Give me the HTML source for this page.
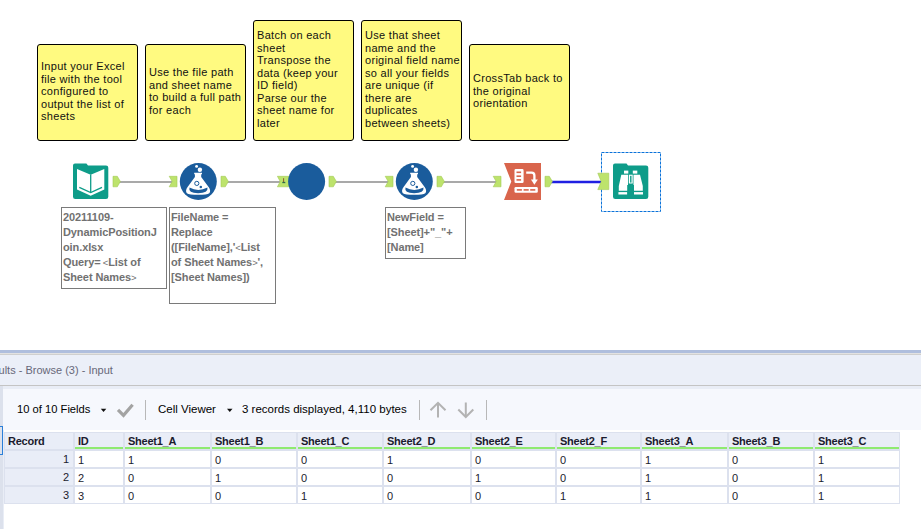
<!DOCTYPE html>
<html><head><meta charset="utf-8">
<style>
*{box-sizing:border-box;margin:0;padding:0}
html,body{width:921px;height:529px;overflow:hidden;background:#fff;font-family:"Liberation Sans",sans-serif}
.abs{position:absolute}
.note{position:absolute;border:1px solid #000;border-radius:3px;background:#FFFA80;width:101px}
.nt{position:absolute;left:3px;font-size:11px;line-height:12.5px;letter-spacing:0.3px;color:#111;white-space:pre}
.ann{position:absolute;border:1px solid #7a7a7a;background:#fff}
.at{position:absolute;left:1px;font-size:11px;line-height:15px;font-weight:bold;color:#717171;white-space:pre;letter-spacing:-0.1px}
.hc{position:absolute;top:432px;height:18px;border:1px solid #DCE1EE;background:#E9EDF7}
.gr{position:absolute;top:447px;height:2px;background:#8FEA70}
.ht{position:absolute;top:435px;font-size:11px;line-height:12px;font-weight:bold;color:#1b1b2e;white-space:pre;letter-spacing:-0.25px}
.rc{position:absolute;height:18px;border:1px solid #DCE1EE;background:#E9EDF7}
.dc{position:absolute;height:18px;border:1px solid #DCE1EE;background:#fff}
.rn{position:absolute;text-align:right;font-size:11px;line-height:12px;color:#1b1b2e}
.dt{position:absolute;font-size:11px;line-height:12px;color:#1b1b2e}
.tb{position:absolute;top:403px;line-height:12px;color:#000;white-space:pre}
</style></head><body>

<!-- sticky notes -->
<div class="note" style="left:37px;top:44px;height:97px"><div class="nt" style="top:15px">Input your Excel
file with the tool
configured to
output the list of
sheets</div></div>
<div class="note" style="left:145px;top:44px;height:97px"><div class="nt" style="top:21px">Use the file path
and sheet name
to build a full path
for each</div></div>
<div class="note" style="left:253px;top:20px;height:121px"><div class="nt" style="top:8px">Batch on each
sheet
Transpose the
data (keep your
ID field)
Parse our the
sheet name for
later</div></div>
<div class="note" style="left:361px;top:20px;height:121px"><div class="nt" style="top:8px">Use that sheet
name and the
original field name
so all your fields
are unique (if
there are
duplicates
between sheets)</div></div>
<div class="note" style="left:469px;top:44px;height:97px"><div class="nt" style="top:27px">CrossTab back to
the original
orientation</div></div>

<!-- annotation boxes -->
<div class="ann" style="left:61px;top:207px;width:106px;height:82px"><div class="at" style="top:2px">20211109-
DynamicPositionJ
oin.xlsx
Query=&#8201;<span style="font-size:9.5px;font-weight:normal">&lt;</span>List of
Sheet Names<span style="font-size:9.5px;font-weight:normal">&gt;</span></div></div>
<div class="ann" style="left:169px;top:207px;width:107px;height:97px"><div class="at" style="top:2px">FileName =
Replace
([FileName],'<span style="font-size:9.5px;font-weight:normal">&lt;</span>List
of Sheet Names<span style="font-size:9.5px;font-weight:normal">&gt;</span>',
[Sheet Names])</div></div>
<div class="ann" style="left:385px;top:207px;width:81px;height:52px"><div class="at" style="top:2px">NewField =
[Sheet]+"_"+
[Name]</div></div>

<!-- workflow svg -->
<svg class="abs" style="left:0;top:0" width="921" height="340" viewBox="0 0 921 340">
  <g stroke="#a9a9a9" stroke-width="2">
    <line x1="119" y1="182" x2="172" y2="182"/>
    <line x1="227" y1="182" x2="280" y2="182"/>
    <line x1="335" y1="182" x2="388" y2="182"/>
    <line x1="443" y1="182" x2="496" y2="182"/>
  </g>
  <line x1="551" y1="182" x2="601" y2="182" stroke="#2020E2" stroke-width="2.3"/>

  <rect x="601.5" y="152.5" width="59" height="59" fill="none" stroke="#0B72D9" stroke-width="1" stroke-dasharray="3,1"/>
  <g fill="#BDE36C" stroke="#A2CA55" stroke-width="0.6">
    <path d="M113,176.3 H117.3 L120.4,181.5 L117.3,186.8 H113 Z"/>
    <path d="M221,176.3 H225.3 L228.4,181.5 L225.3,186.8 H221 Z"/>
    <path d="M329,176.3 H333.3 L336.4,181.5 L333.3,186.8 H329 Z"/>
    <path d="M437,176.3 H441.3 L444.4,181.5 L441.3,186.8 H437 Z"/>
    <path d="M545,176.3 H549.3 L552.4,181.5 L549.3,186.8 H545 Z"/>
  </g>
  <g fill="#BDE36C" stroke="#A2CA55" stroke-width="0.6">
    <path d="M169.2,176.3 H177 V186.8 H169.2 L172.2,181.5 Z"/>
    <path d="M277.4,176.3 H289 V186.8 H277.4 L280.2,181.5 Z"/>
    <path d="M385.2,176.3 H393 V186.8 H385.2 L388.2,181.5 Z"/>
    <path d="M493.2,176.3 H501 V186.8 H493.2 L496.2,181.5 Z"/>
    <path d="M597.8,173.2 H608.8 V189.6 H597.8 L601.2,181.5 Z"/>
  </g>

  <!-- input tool -->
  <path d="M73,165.5 Q73,163.4 75,163.4 H86.4 L88,165.6 H106 Q108.3,165.6 108.3,167.8 V196.8 Q108.3,199 106,199 H75.3 Q73,199 73,196.8 Z" fill="#0E9C89"/>
  <path d="M77,169.1 L90.7,174.7 L104.3,169.1 V189.4 L90.7,195.8 L77,189.4 Z" fill="#fff"/>
  <g stroke="#0E9C89" stroke-width="1.3" fill="none">
    <path d="M90.7,174.5 V192.5"/>
    <path d="M79.3,187.3 L90.7,192.6 L102,187.3"/>
  </g>

  <!-- formula 1 -->
  <g transform="translate(198.3,181.5)">
    <circle r="18.5" fill="#1A5C9C"/>
    <g fill="#fff">
      <circle cx="-1.7" cy="-15.1" r="1.45"/>
      <circle cx="1.6" cy="-11.8" r="2.2"/>
      <path d="M-4.1,-8.7 H3.7 V-7.2 H2.9 V-4.6 L10.3,5.6 Q13,9.4 11,11.8 Q8.8,13.3 -0.2,13.3 Q-9.2,13.3 -11.4,11.8 Q-13.4,9.4 -10.7,5.6 L-3.4,-4.6 V-7.2 H-4.1 Z"/>
    </g>
    <path d="M-8.8,6 Q-0.2,10.8 9.2,6 Q10.2,11.6 -0.2,11.8 Q-10.4,11.6 -8.8,6 Z" fill="#1A5C9C"/>
    <circle cx="-1.5" cy="1.9" r="2.1" fill="none" stroke="#1A5C9C" stroke-width="1"/>
    <circle cx="2.5" cy="5.4" r="1.25" fill="#1A5C9C"/>
  </g>

  <!-- batch macro -->
  <circle cx="306.6" cy="181.5" r="18.5" fill="#1A5C9C"/>
  <path d="M283.6,178.2 V182.6" stroke="#8a5a2a" stroke-width="1"/>
  <path d="M282.3,182.5 H285.3" stroke="#2f6a4a" stroke-width="1.3"/>

  <!-- formula 2 -->
  <g transform="translate(414.3,181.5)">
    <circle r="18.5" fill="#1A5C9C"/>
    <g fill="#fff">
      <circle cx="-1.7" cy="-15.1" r="1.45"/>
      <circle cx="1.6" cy="-11.8" r="2.2"/>
      <path d="M-4.1,-8.7 H3.7 V-7.2 H2.9 V-4.6 L10.3,5.6 Q13,9.4 11,11.8 Q8.8,13.3 -0.2,13.3 Q-9.2,13.3 -11.4,11.8 Q-13.4,9.4 -10.7,5.6 L-3.4,-4.6 V-7.2 H-4.1 Z"/>
    </g>
    <path d="M-8.8,6 Q-0.2,10.8 9.2,6 Q10.2,11.6 -0.2,11.8 Q-10.4,11.6 -8.8,6 Z" fill="#1A5C9C"/>
    <circle cx="-1.5" cy="1.9" r="2.1" fill="none" stroke="#1A5C9C" stroke-width="1"/>
    <circle cx="2.5" cy="5.4" r="1.25" fill="#1A5C9C"/>
  </g>

  <!-- crosstab -->
  <path d="M504,163 H541 V200 H504 L511.3,181.5 Z" fill="#D9654C"/>
  <g fill="#fff">
    <rect x="514.5" y="169.1" width="9.1" height="13.9" rx="1.3"/>
    <rect x="514.5" y="187" width="23.3" height="5.8" rx="1.3"/>
    <path d="M531,179.4 H537.8 L534.4,184.8 Z"/>
  </g>
  <path d="M526.2,172.6 H531.6 Q534.4,172.6 534.4,175.4 V180" fill="none" stroke="#fff" stroke-width="2.3"/>
  <g fill="#D9654C">
    <rect x="516.5" y="171.5" width="4.6" height="1.6"/>
    <rect x="516.5" y="175.4" width="4.6" height="1.6"/>
    <rect x="516.5" y="179.1" width="4.6" height="1.6"/>
    <rect x="516.8" y="189.1" width="5.1" height="1.6"/>
    <rect x="523.6" y="189.1" width="5.1" height="1.6"/>
    <rect x="530.2" y="189.1" width="5.1" height="1.6"/>
  </g>

  <!-- browse -->
  <path d="M613,165.5 Q613,163.4 615,163.4 H626.5 L628,165.6 H646 Q648.3,165.6 648.3,167.8 V196.8 Q648.3,199 646,199 H615.3 Q613,199 613,196.8 Z" fill="#0E9C89"/>
  <g fill="#fff">
    <rect x="624" y="170.6" width="4.3" height="3"/>
    <rect x="632.8" y="170.6" width="4.5" height="3"/>
    <path d="M621.3,174.7 H628 V185 H627.2 V190.8 H618.8 V186 Z"/>
    <path d="M633.5,174.7 H640 L642.8,186 V190.8 H634 V185 H633.5 Z"/>
    <rect x="628.8" y="174.7" width="3.9" height="8.8"/>
    <rect x="618.4" y="192.1" width="8.7" height="2.4"/>
    <rect x="634" y="192.1" width="9" height="2.4"/>
  </g>
  <rect x="630.1" y="175.8" width="1.4" height="6.8" fill="#0E9C89"/>
</svg>

<!-- results panel -->
<div class="abs" style="left:0;top:350px;width:921px;height:3px;background:#AFBEDD"></div>
<div class="abs" style="left:0;top:353px;width:921px;height:1px;background:#E2E2E2"></div>
<div class="abs" style="left:0;top:354px;width:921px;height:1px;background:#CFCFCF"></div>
<div class="abs" style="left:0;top:355px;width:921px;height:30px;background:#EBEFF8"></div>
<div class="abs" style="left:-21px;top:364px;font-size:11px;line-height:12px;color:#686878;white-space:pre">Results - Browse (3) - Input</div>
<div class="abs" style="left:0;top:385px;width:921px;height:1px;background:#C4C4C4"></div>
<div class="abs" style="left:0;top:386px;width:921px;height:143px;background:#E9EDF6"></div>
<div class="abs" style="left:3px;top:389px;width:918px;height:41px;background:#F6F8FD"></div>
<div class="abs" style="left:4px;top:430px;width:917px;height:99px;background:#fff"></div>
<div class="abs" style="left:0;top:386px;width:3px;height:143px;background:#DCE1EC"></div>
<div class="abs" style="left:-10px;top:426px;width:13px;height:29px;border:1px solid #2B7FD8"></div>

<div class="tb" style="left:17px;font-size:11.2px">10 of 10 Fields</div>
<svg class="abs" style="left:0;top:386px" width="921" height="45">
  <path d="M100.8,22.8 H106.3 L103.55,26 Z" fill="#111"/>
  <path d="M118,23.8 L123.5,29.3 L132.6,18.8" fill="none" stroke="#a3a3a3" stroke-width="3.2"/>
  <line x1="145.5" y1="14" x2="145.5" y2="34" stroke="#b8b8b8" stroke-width="1"/>
  <path d="M227,22.8 H232.5 L229.75,26 Z" fill="#111"/>
  <line x1="419.5" y1="14" x2="419.5" y2="34" stroke="#b8b8b8" stroke-width="1"/>
  <line x1="486.5" y1="14" x2="486.5" y2="34" stroke="#b8b8b8" stroke-width="1"/>
  <g fill="none" stroke="#b3b3b3" stroke-width="2">
    <path d="M438,31.5 V17"/><path d="M430.5,24.3 L438,16.8 L445.5,24.3"/>
    <path d="M465.8,16.5 V31"/><path d="M458.3,23.5 L465.8,31 L473.3,23.5"/>
  </g>
</svg>
<div class="tb" style="left:158px;font-size:11.5px">Cell Viewer</div>
<div class="tb" style="left:242px;font-size:11.5px">3 records displayed, 4,110 bytes</div>

<!-- table -->
<div class="hc" style="left:4px;width:70px"></div>
<div class="ht" style="left:8px">Record</div>
<div class="hc" style="left:74px;width:50px"></div>
<div class="gr" style="left:75px;width:48px"></div>
<div class="ht" style="left:78px">ID</div>
<div class="hc" style="left:124px;width:87px"></div>
<div class="gr" style="left:125px;width:85px"></div>
<div class="ht" style="left:128px">Sheet1_A</div>
<div class="hc" style="left:211px;width:86px"></div>
<div class="gr" style="left:212px;width:84px"></div>
<div class="ht" style="left:215px">Sheet1_B</div>
<div class="hc" style="left:297px;width:86px"></div>
<div class="gr" style="left:298px;width:84px"></div>
<div class="ht" style="left:301px">Sheet1_C</div>
<div class="hc" style="left:383px;width:88px"></div>
<div class="gr" style="left:384px;width:86px"></div>
<div class="ht" style="left:387px">Sheet2_D</div>
<div class="hc" style="left:471px;width:85px"></div>
<div class="gr" style="left:472px;width:83px"></div>
<div class="ht" style="left:475px">Sheet2_E</div>
<div class="hc" style="left:556px;width:85px"></div>
<div class="gr" style="left:557px;width:83px"></div>
<div class="ht" style="left:560px">Sheet2_F</div>
<div class="hc" style="left:641px;width:87px"></div>
<div class="gr" style="left:642px;width:85px"></div>
<div class="ht" style="left:645px">Sheet3_A</div>
<div class="hc" style="left:728px;width:86px"></div>
<div class="gr" style="left:729px;width:84px"></div>
<div class="ht" style="left:732px">Sheet3_B</div>
<div class="hc" style="left:814px;width:86px"></div>
<div class="gr" style="left:815px;width:84px"></div>
<div class="ht" style="left:818px">Sheet3_C</div>
<div class="rc" style="left:4px;top:450px;width:70px"></div>
<div class="rn" style="left:4px;top:453px;width:65px">1</div>
<div class="dc" style="left:74px;top:450px;width:50px"></div>
<div class="dt" style="left:78px;top:454px">1</div>
<div class="dc" style="left:124px;top:450px;width:87px"></div>
<div class="dt" style="left:128px;top:454px">1</div>
<div class="dc" style="left:211px;top:450px;width:86px"></div>
<div class="dt" style="left:215px;top:454px">0</div>
<div class="dc" style="left:297px;top:450px;width:86px"></div>
<div class="dt" style="left:301px;top:454px">0</div>
<div class="dc" style="left:383px;top:450px;width:88px"></div>
<div class="dt" style="left:387px;top:454px">1</div>
<div class="dc" style="left:471px;top:450px;width:85px"></div>
<div class="dt" style="left:475px;top:454px">0</div>
<div class="dc" style="left:556px;top:450px;width:85px"></div>
<div class="dt" style="left:560px;top:454px">0</div>
<div class="dc" style="left:641px;top:450px;width:87px"></div>
<div class="dt" style="left:645px;top:454px">1</div>
<div class="dc" style="left:728px;top:450px;width:86px"></div>
<div class="dt" style="left:732px;top:454px">0</div>
<div class="dc" style="left:814px;top:450px;width:86px"></div>
<div class="dt" style="left:818px;top:454px">1</div>
<div class="rc" style="left:4px;top:468px;width:70px"></div>
<div class="rn" style="left:4px;top:471px;width:65px">2</div>
<div class="dc" style="left:74px;top:468px;width:50px"></div>
<div class="dt" style="left:78px;top:472px">2</div>
<div class="dc" style="left:124px;top:468px;width:87px"></div>
<div class="dt" style="left:128px;top:472px">0</div>
<div class="dc" style="left:211px;top:468px;width:86px"></div>
<div class="dt" style="left:215px;top:472px">1</div>
<div class="dc" style="left:297px;top:468px;width:86px"></div>
<div class="dt" style="left:301px;top:472px">0</div>
<div class="dc" style="left:383px;top:468px;width:88px"></div>
<div class="dt" style="left:387px;top:472px">0</div>
<div class="dc" style="left:471px;top:468px;width:85px"></div>
<div class="dt" style="left:475px;top:472px">1</div>
<div class="dc" style="left:556px;top:468px;width:85px"></div>
<div class="dt" style="left:560px;top:472px">0</div>
<div class="dc" style="left:641px;top:468px;width:87px"></div>
<div class="dt" style="left:645px;top:472px">1</div>
<div class="dc" style="left:728px;top:468px;width:86px"></div>
<div class="dt" style="left:732px;top:472px">0</div>
<div class="dc" style="left:814px;top:468px;width:86px"></div>
<div class="dt" style="left:818px;top:472px">1</div>
<div class="rc" style="left:4px;top:486px;width:70px"></div>
<div class="rn" style="left:4px;top:489px;width:65px">3</div>
<div class="dc" style="left:74px;top:486px;width:50px"></div>
<div class="dt" style="left:78px;top:490px">3</div>
<div class="dc" style="left:124px;top:486px;width:87px"></div>
<div class="dt" style="left:128px;top:490px">0</div>
<div class="dc" style="left:211px;top:486px;width:86px"></div>
<div class="dt" style="left:215px;top:490px">0</div>
<div class="dc" style="left:297px;top:486px;width:86px"></div>
<div class="dt" style="left:301px;top:490px">1</div>
<div class="dc" style="left:383px;top:486px;width:88px"></div>
<div class="dt" style="left:387px;top:490px">0</div>
<div class="dc" style="left:471px;top:486px;width:85px"></div>
<div class="dt" style="left:475px;top:490px">0</div>
<div class="dc" style="left:556px;top:486px;width:85px"></div>
<div class="dt" style="left:560px;top:490px">1</div>
<div class="dc" style="left:641px;top:486px;width:87px"></div>
<div class="dt" style="left:645px;top:490px">1</div>
<div class="dc" style="left:728px;top:486px;width:86px"></div>
<div class="dt" style="left:732px;top:490px">0</div>
<div class="dc" style="left:814px;top:486px;width:86px"></div>
<div class="dt" style="left:818px;top:490px">1</div>
</body></html>
